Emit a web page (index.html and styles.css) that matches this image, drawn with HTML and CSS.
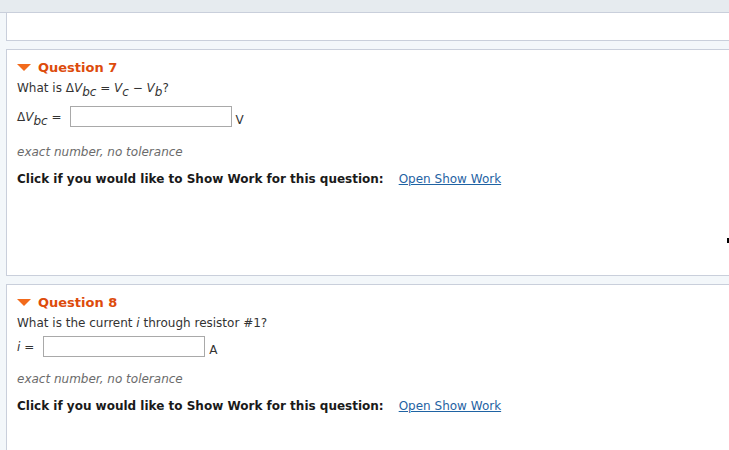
FILE: index.html
```html
<!DOCTYPE html>
<html>
<head>
<meta charset="utf-8">
<link rel="stylesheet" href="styles.css">
</head>
<body>
<div class="topbar"></div>
<div class="page">
  <div class="card card-short"></div>

  <div class="card card-q7">
    <div class="qhead"><span class="tri"></span><span class="qtitle">Question 7</span></div>
    <div class="qtext">What is Δ<i>V</i><sub><i>bc</i></sub> = <i>V</i><sub><i>c</i></sub> − <i>V</i><sub><i>b</i></sub>?</div>
    <div class="answer q7-answer">
      <span class="label">Δ<i>V</i><sub><i>bc</i></sub> =</span>
      <span class="box"></span>
      <span class="unit">V</span>
    </div>
    <div class="tol q7-tol">exact number, no tolerance</div>
    <div class="work">
      <span class="work-label">Click if you would like to Show Work for this question:</span>
      <a class="work-link" href="#">Open Show Work</a>
    </div>
    <div class="edge-mark"><span></span></div>
  </div>

  <div class="card card-q8">
    <div class="qhead"><span class="tri"></span><span class="qtitle">Question 8</span></div>
    <div class="qtext">What is the current <i>i</i> through resistor #1?</div>
    <div class="answer q8-answer">
      <span class="label"><i>i</i> =</span>
      <span class="box"></span>
      <span class="unit">A</span>
    </div>
    <div class="tol q8-tol">exact number, no tolerance</div>
    <div class="work">
      <span class="work-label">Click if you would like to Show Work for this question:</span>
      <a class="work-link" href="#">Open Show Work</a>
    </div>
  </div>
</div>
</body>
</html>
```

FILE: styles.css
```css
html, body {
  margin: 0;
  padding: 0;
  height: 100%;
  overflow: hidden;
  background: #f3f7fa;
}
body {
  font-family: "DejaVu Sans", Verdana, sans-serif;
  font-size: 12px;
  color: #333333;
}
.topbar {
  height: 12px;
  background: #e6ebef;
  border-bottom: 1px solid #c9cfdb;
}
.page {
  padding-left: 6px;
  overflow: hidden;
}
.card {
  width: 760px;
  background: #ffffff;
  border: 1px solid #c9cfdb;
  box-sizing: border-box;
  padding: 9px 0 0 10px;
}
.card-short {
  height: 28px;
  border-top: none;
  padding: 0;
}
.card-q7 {
  margin-top: 8px;
  height: 227px;
}
.card-q8 {
  margin-top: 8px;
  height: 200px;
}
.qhead {
  display: flex;
  align-items: center;
  height: 16px;
}
.tri {
  width: 0;
  height: 0;
  border-left: 7px solid transparent;
  border-right: 7px solid transparent;
  border-top: 7px solid #f26a1b;
  margin-right: 7px;
  margin-top: 1px;
}
.qtitle {
  font-weight: bold;
  font-size: 13px;
  color: #dd4b0b;
}
.qtext {
  margin-top: 5px;
  line-height: 16px;
}
sub {
  font-size: 12px;
  vertical-align: -4px;
  line-height: 0;
}
.answer {
  display: flex;
  align-items: flex-end;
}
.q7-answer {
  margin-top: 10px;
}
.q8-answer {
  margin-top: 5px;
}
.label {
  line-height: 16px;
  margin-bottom: 2px;
}
.q7-answer .box {
  margin-left: 8px;
}
.q8-answer .box {
  margin-left: 9px;
}
.box {
  width: 162px;
  height: 21px;
  box-sizing: border-box;
  border: 1px solid #a9a9a9;
  background: #fff;
}
.unit {
  margin-left: 4px;
  line-height: 16px;
  margin-bottom: -1px;
}
.tol {
  font-style: italic;
  color: #6b6b6b;
  line-height: 16px;
}
.q7-tol {
  margin-top: 17px;
}
.q8-tol {
  margin-top: 14px;
}
.work {
  margin-top: 11px;
  display: flex;
  align-items: baseline;
  line-height: 16px;
}
.work-label {
  font-weight: bold;
  color: #1a1a1a;
}
.work-link {
  margin-left: 15px;
  color: #1f63a3;
  text-decoration: underline;
}
.edge-mark {
  margin-top: 51px;
  padding-left: 710px;
}
.edge-mark span {
  display: block;
  width: 2px;
  height: 5px;
  background: #000;
}
```
